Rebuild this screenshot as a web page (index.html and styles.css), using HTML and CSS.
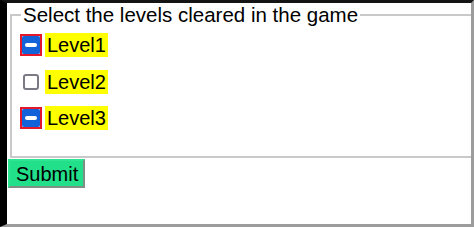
FILE: index.html
```html
<!DOCTYPE html>
<html>

<head>
    <link rel="stylesheet" href="styles.css">
    <title>Levels</title>
</head>

<body>
    <div id="frame">
        <form>
            <fieldset class="levels">
                <legend>Select the levels cleared in the game</legend>
                <div class="row">
                    <span class="box"><span class="box-mixed"><span class="dash"></span></span></span>
                    <label class="name">Level1</label>
                </div>
                <div class="row">
                    <span class="box"><span class="box-empty"></span></span>
                    <label class="name">Level2</label>
                </div>
                <div class="row">
                    <span class="box"><span class="box-mixed"><span class="dash"></span></span></span>
                    <label class="name">Level3</label>
                </div>
            </fieldset>
            <button type="button" class="submit">Submit</button>
        </form>
    </div>
</body>

</html>
```

FILE: styles.css
```css
html,
body {
    margin: 0;
    padding: 0;
    background: #FFFFFF;
}

body {
    font-family: "Liberation Sans", Arial, sans-serif;
    font-size: 20px;
    color: #000;
}

#frame {
    box-sizing: border-box;
    width: 474px;
    height: 227px;
    border-left: 7px solid #000;
    border-top: 3px solid #141414;
    border-right: 3px solid #9c9c9c;
    border-bottom: 3px solid #9c9c9c;
    padding-left: 1px;
    overflow: hidden;
}

.levels {
    margin: 0 0 0 2px;
    border: 2px solid #c9c9c9;
    border-right: none;
    padding: 7px 0 26px 7px;
}

.levels legend {
    padding: 0 2px;
    margin-left: 2px;
    font-size: 20.5px;
    line-height: 23px;
}

.row {
    display: flex;
    align-items: center;
    gap: 2px;
    height: 24px;
    margin-bottom: 12.5px;
}

.row:last-child {
    margin-bottom: 0;
}

.box {
    width: 24px;
    display: flex;
    justify-content: center;
    align-items: center;
}

.box-mixed {
    box-sizing: border-box;
    width: 22px;
    height: 22px;
    border: 2px solid #e5172b;
    background: #c9c9d6;
    display: flex;
    justify-content: center;
    align-items: center;
}

.box-mixed .dash {
    display: block;
    width: 18px;
    height: 18px;
    border-radius: 2px;
    background: #1462d8;
    position: relative;
}

.box-mixed .dash::after {
    content: "";
    position: absolute;
    left: 3px;
    top: 7px;
    width: 12px;
    height: 4px;
    border-radius: 2px;
    background: #fff;
}

.box-empty {
    box-sizing: border-box;
    width: 16px;
    height: 16px;
    border: 2px solid #7b7b85;
    border-radius: 3px;
    background: #fff;
}

.name {
    background: #ffff00;
    line-height: 24px;
    padding: 0 2px;
}

.submit {
    display: block;
    margin: 1px 0 0 0;
    font-family: "Liberation Sans", Arial, sans-serif;
    font-size: 20px;
    line-height: 23px;
    padding: 2px 5px 0 6px;
    background: #22df8a;
    color: #000;
    border: 2px solid;
    border-color: #2ee591 #7f8f86 #7f8f86 #2ee591;
}
```
